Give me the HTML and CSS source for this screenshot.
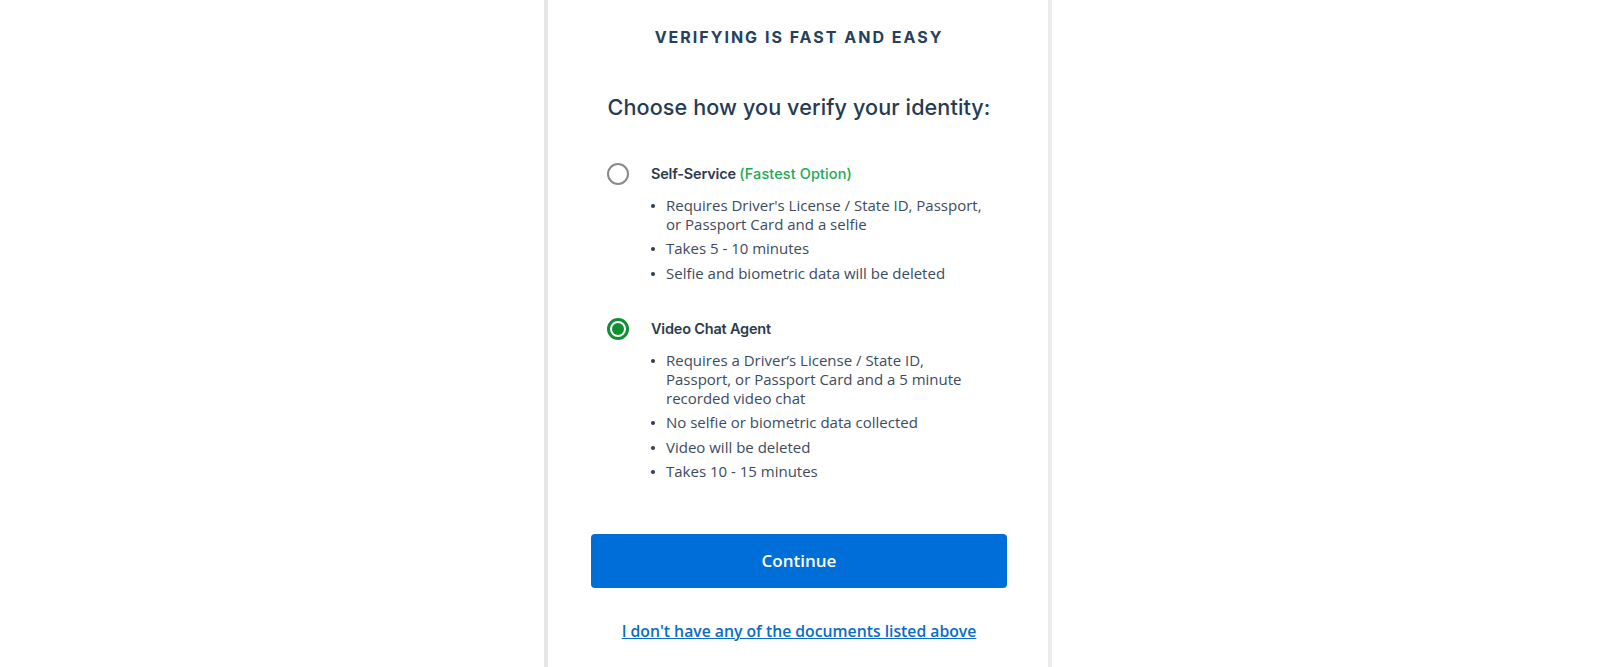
FILE: index.html
```html
<!DOCTYPE html>
<html lang="en">
<head>
<meta charset="utf-8">
<title>Verify your identity</title>
<link rel="stylesheet" href="styles.css">
</head>
<body>
<div class="page">
  <main class="card">
    <h2 class="eyebrow">VERIFYING IS FAST AND EASY</h2>
    <h1 class="heading">Choose how you verify your identity:</h1>
    <div class="options">
      <label class="option">
        <span class="radio"></span>
        <span class="option-body">
          <span class="option-title">Self-Service <span class="fast">(Fastest Option)</span></span>
          <ul class="bullets">
            <li>Requires Driver's License / State ID, Passport, or Passport Card and a selfie</li>
            <li>Takes 5 - 10 minutes</li>
            <li>Selfie and biometric data will be deleted</li>
          </ul>
        </span>
      </label>
      <label class="option option-second">
        <span class="radio checked"></span>
        <span class="option-body">
          <span class="option-title">Video Chat Agent</span>
          <ul class="bullets">
            <li>Requires a Driver’s License / State ID, Passport, or Passport Card and a 5 minute recorded video chat</li>
            <li>No selfie or biometric data collected</li>
            <li>Video will be deleted</li>
            <li>Takes 10 - 15 minutes</li>
          </ul>
        </span>
      </label>
    </div>
    <button class="continue" type="button">Continue</button>
    <a class="nodocs" href="#">I don't have any of the documents listed above</a>
  </main>
</div>
</body>
</html>
```

FILE: styles.css
```css
html, body {
  margin: 0;
  padding: 0;
  background: #ffffff;
}

.page {
  display: flex;
  justify-content: center;
  padding-right: 4px;
  min-height: 667px;
}

.card {
  width: 508px;
  box-sizing: border-box;
  border-left: 4px solid #e6e6e6;
  border-right: 4px solid #ececec;
  padding: 25px 41px 30px 43px;
  display: flex;
  flex-direction: column;
  font-family: "Open Sans", "Liberation Sans", sans-serif;
}

.eyebrow {
  margin: 0;
  font-family: Inter, "Liberation Sans", sans-serif;
  font-size: 16px;
  font-weight: 700;
  line-height: 24px;
  letter-spacing: 2px;
  color: #26405d;
  text-align: center;
}

.heading {
  margin: 43px 0 0;
  font-family: Inter, "Liberation Sans", sans-serif;
  font-size: 21.6px;
  font-weight: 500;
  line-height: 30px;
  color: #253b52;
  text-align: center;
  letter-spacing: 0.1px;
}

.options {
  margin: 41px 0 0 16px;
  display: flex;
  flex-direction: column;
}

.option {
  display: flex;
  gap: 22px;
  align-items: flex-start;
}

.option-second {
  margin-top: 36px;
}

.radio {
  flex: none;
  width: 22px;
  height: 22px;
  box-sizing: border-box;
  border: 2px solid #8a8a8a;
  border-radius: 50%;
  background: #fff;
  display: flex;
  align-items: center;
  justify-content: center;
}

.radio.checked {
  border: 3px solid #0f8f34;
}

.radio.checked::after {
  content: "";
  width: 12px;
  height: 12px;
  border-radius: 50%;
  background: #0f8f34;
}

.option-body {
  display: flex;
  flex-direction: column;
}

.option-title {
  font-family: Inter, "Liberation Sans", sans-serif;
  font-size: 14.5px;
  font-weight: 600;
  line-height: 22px;
  color: #2b3a4d;
  letter-spacing: -0.2px;
}

.fast {
  color: #22a855;
  font-weight: 500;
  letter-spacing: 0.1px;
}

.bullets {
  list-style: none;
  margin: 11px 0 0;
  padding: 0;
  width: 336px;
}

.bullets li {
  position: relative;
  padding-left: 15px;
  font-size: 15px;
  line-height: 18.6px;
  color: #3d4b5e;
}

.bullets li + li {
  margin-top: 6px;
}

.bullets li::before {
  content: "";
  position: absolute;
  left: 0;
  top: 8px;
  width: 4px;
  height: 4px;
  border-radius: 50%;
  background: #2f3d4f;
}

.continue {
  margin-top: 53px;
  height: 54px;
  width: 416px;
  border: none;
  border-radius: 4px;
  background: #006ed8;
  color: #ffffff;
  font-family: "Open Sans", "Liberation Sans", sans-serif;
  font-size: 17px;
  font-weight: 600;
  cursor: pointer;
}

.nodocs {
  margin-top: 33px;
  align-self: center;
  font-size: 15.75px;
  font-weight: 600;
  line-height: 20px;
  color: #0a6cc4;
  text-decoration: underline;
}
```
